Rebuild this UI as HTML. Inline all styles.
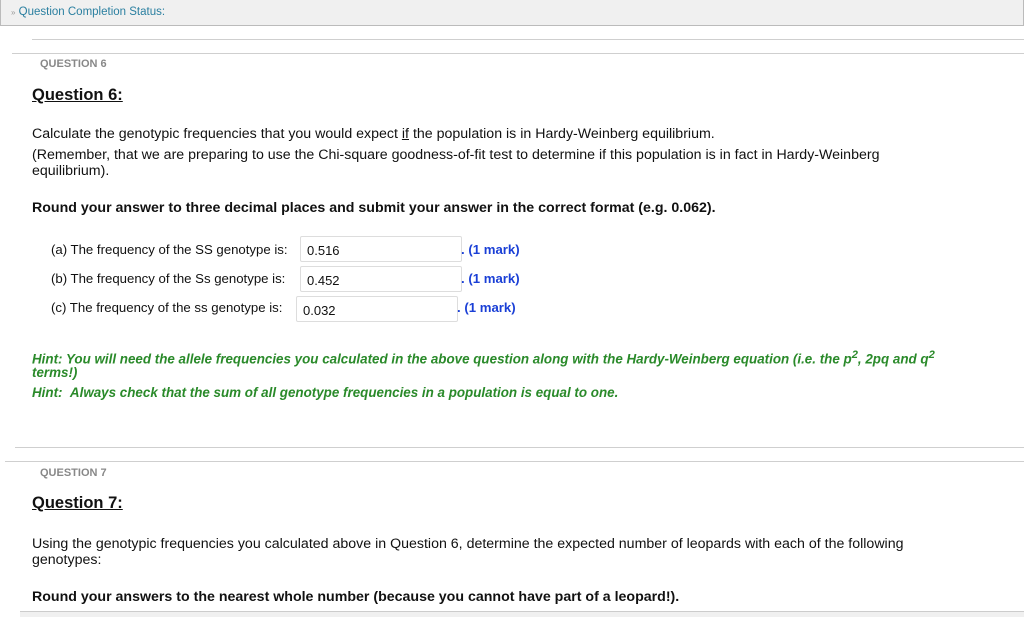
<!DOCTYPE html>
<html><head><meta charset="utf-8"><style>
body{margin:0;width:1024px;height:616px;overflow:hidden;background:#fff;font-family:"Liberation Sans",sans-serif;color:#111;position:relative}
.a{position:absolute;white-space:nowrap}
.t{font-size:14.2px}
.line{position:absolute;height:1px;background:#cfcfcf;right:0}
.box{position:absolute;border:1px solid #ddd;border-radius:2px;background:#fff;font-size:13px;padding:6px 0 0 6px;box-sizing:border-box;height:26px}
.mk{color:#1a3fd6;font-weight:bold;font-size:13.2px}
.g{color:#2a8a2a;font-weight:bold;font-style:italic;font-size:13.4px}
h{font-weight:bold;font-size:16.5px;text-decoration:underline}
.ql{color:#888;font-weight:bold;font-size:11px}
</style></head><body>
<div class="a" style="left:0;top:0;width:1022px;height:25px;background:#f0f0f0;border:1px solid #bbb;border-top:none"></div>
<div class="a" style="left:11px;top:6px;font-size:11.5px;color:#2a7fa0"><span style="color:#999;font-size:8px">»</span> Question Completion Status:</div>
<div class="line" style="left:32px;top:39px"></div>
<div class="line" style="left:12px;top:53px"></div>
<div class="a ql" style="left:40px;top:58px">QUESTION 6</div>
<div class="a" style="left:32px;top:86px"><h>Question 6:</h></div>
<div class="a t" style="left:32px;top:126px">Calculate the genotypic frequencies that you would expect <u>if</u> the population is in Hardy-Weinberg equilibrium.</div>
<div class="a t" style="left:32px;top:147px">(Remember, that we are preparing to use the Chi-square goodness-of-fit test to determine if this population is in fact in Hardy-Weinberg</div>
<div class="a t" style="left:32px;top:163px">equilibrium).</div>
<div class="a t" style="left:32px;top:200px;font-weight:bold">Round your answer to three decimal places and submit your answer in the correct format (e.g. 0.062).</div>
<div class="a" style="left:51px;top:242px;font-size:13.2px">(a) The frequency of the SS genotype is:</div>
<div class="box" style="left:300px;top:236px;width:162px">0.516</div>
<div class="a mk" style="left:461px;top:242px">. (1 mark)</div>
<div class="a" style="left:51px;top:271px;font-size:13.2px">(b) The frequency of the Ss genotype is:</div>
<div class="box" style="left:300px;top:266px;width:162px">0.452</div>
<div class="a mk" style="left:461px;top:271px">. (1 mark)</div>
<div class="a" style="left:51px;top:300px;font-size:13.2px">(c) The frequency of the ss genotype is:</div>
<div class="box" style="left:296px;top:296px;width:162px">0.032</div>
<div class="a mk" style="left:457px;top:300px">. (1 mark)</div>
<div class="a g" style="left:32px;top:349px">Hint: You will need the allele frequencies you calculated in the above question along with the Hardy-Weinberg equation (i.e. the p<sup>2</sup>, 2pq and q<sup>2</sup></div>
<div class="a g" style="left:32px;top:365px">terms!)</div>
<div class="a g" style="left:32px;top:385px">Hint: &nbsp;Always check that the sum of all genotype frequencies in a population is equal to one.</div>
<div class="line" style="left:15px;top:447px"></div>
<div class="line" style="left:5px;top:461px"></div>
<div class="a ql" style="left:40px;top:467px">QUESTION 7</div>
<div class="a" style="left:32px;top:494px"><h>Question 7:</h></div>
<div class="a t" style="left:32px;top:536px">Using the genotypic frequencies you calculated above in Question 6, determine the expected number of leopards with each of the following</div>
<div class="a t" style="left:32px;top:552px">genotypes:</div>
<div class="a t" style="left:32px;top:589px;font-weight:bold">Round your answers to the nearest whole number (because you cannot have part of a leopard!).</div>
<div class="a" style="left:20px;top:611px;right:0;height:5px;background:#f0f0f0;border-top:1px solid #ccc"></div>
</body></html>
